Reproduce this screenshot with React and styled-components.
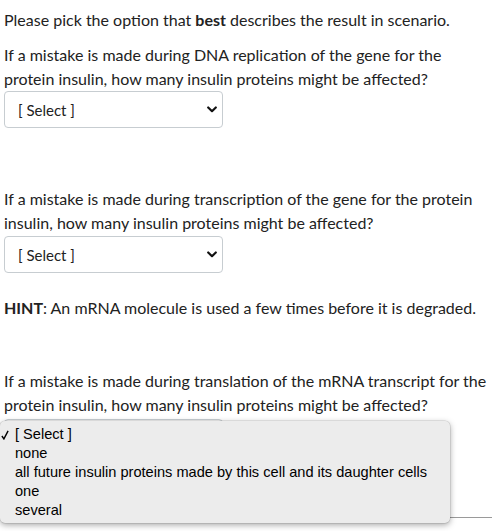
import React from 'react'
import styled, { createGlobalStyle } from 'styled-components'

const GlobalStyle = createGlobalStyle`
  html, body {
    margin: 0;
    padding: 0;
    background: #fff;
  }
  body {
    font-family: Lato, "Open Sans", sans-serif;
    color: #222;
  }
`

const Page = styled.div`
  position: relative;
  width: 492px;
  height: 531px;
  overflow: hidden;
  padding: 8px 4px 0;
  box-sizing: border-box;
`

const Para = styled.p`
  margin: ${p => p.$top || 0}px 0 0;
  font-size: 16px;
  line-height: 24px;
  color: #222;
`

const SelectBox = styled.div`
  display: flex;
  align-items: center;
  justify-content: space-between;
  width: 219px;
  height: 37px;
  margin-top: ${p => p.$top || 0}px;
  padding: 0 5px 0 13px;
  box-sizing: border-box;
  border: 1px solid #c7cdd1;
  border-radius: 4px;
  background: #fff;
  font-size: 15px;
  color: #222;
`

const SelectLabel = styled.span`
  visibility: ${p => (p.$hidden ? 'hidden' : 'visible')};
`

const Divider = styled.div`
  margin-top: 61px;
  margin-right: -4px;
  border-top: 1px solid #9a9a9a;
`

const Menu = styled.ul`
  position: absolute;
  left: 0;
  top: 421px;
  width: 450px;
  margin: 0;
  padding: 4px 0 3px;
  box-sizing: border-box;
  list-style: none;
  background: #ececec;
  border-radius: 5px;
  box-shadow: 0 2px 6px rgba(0, 0, 0, 0.35), 0 0 0 0.5px rgba(0, 0, 0, 0.15);
  font-family: "Liberation Sans", Arial, sans-serif;
  font-size: 14.6px;
  color: #000;
`

const MenuItem = styled.li`
  position: relative;
  height: 19px;
  line-height: 19px;
  padding-left: 15px;
`

const Check = styled.svg`
  position: absolute;
  left: 1px;
  top: 5px;
`

const Chevron = () => (
  <svg width="10" height="7" viewBox="0 0 10 7">
    <path d="M1.2 1.5 L5 5.2 L8.8 1.5" fill="none" stroke="#111" strokeWidth="2.2" strokeLinecap="round" strokeLinejoin="round" />
  </svg>
)

const Select = ({ top, open }) => (
  <SelectBox $top={top}>
    <SelectLabel $hidden={open}>[ Select ]</SelectLabel>
    <Chevron />
  </SelectBox>
)

const options = [
  '[ Select ]',
  'none',
  'all future insulin proteins made by this cell and its daughter cells',
  'one',
  'several',
]

export default function App() {
  return (
    <>
      <GlobalStyle />
      <Page>
        <Para>
          Please pick the option that <b>best</b> describes the result in scenario.
        </Para>
        <Para $top={11}>
          If a mistake is made during DNA replication of the gene for the protein insulin, how many
          insulin proteins might be affected?
        </Para>
        <Select />
        <Para $top={59}>
          If a mistake is made during transcription of the gene for the protein insulin, how many
          insulin proteins might be affected?
        </Para>
        <Select top={1} />
        <Para $top={23}>
          <b>HINT</b>: An mRNA molecule is used a few times before it is degraded.
        </Para>
        <Para $top={49}>
          If a mistake is made during translation of the mRNA transcript for the protein insulin, how
          many insulin proteins might be affected?
        </Para>
        <Select top={2} open />
        <Divider />
        <Menu>
          {options.map((o, i) => (
            <MenuItem key={o}>
              {i === 0 && (
                <Check width="8" height="10" viewBox="0 0 8 10">
                  <path d="M0.9 6 L2.9 8.9 L7.1 0.9" fill="none" stroke="#000" strokeWidth="1.4" />
                </Check>
              )}
              {o}
            </MenuItem>
          ))}
        </Menu>
      </Page>
    </>
  )
}
